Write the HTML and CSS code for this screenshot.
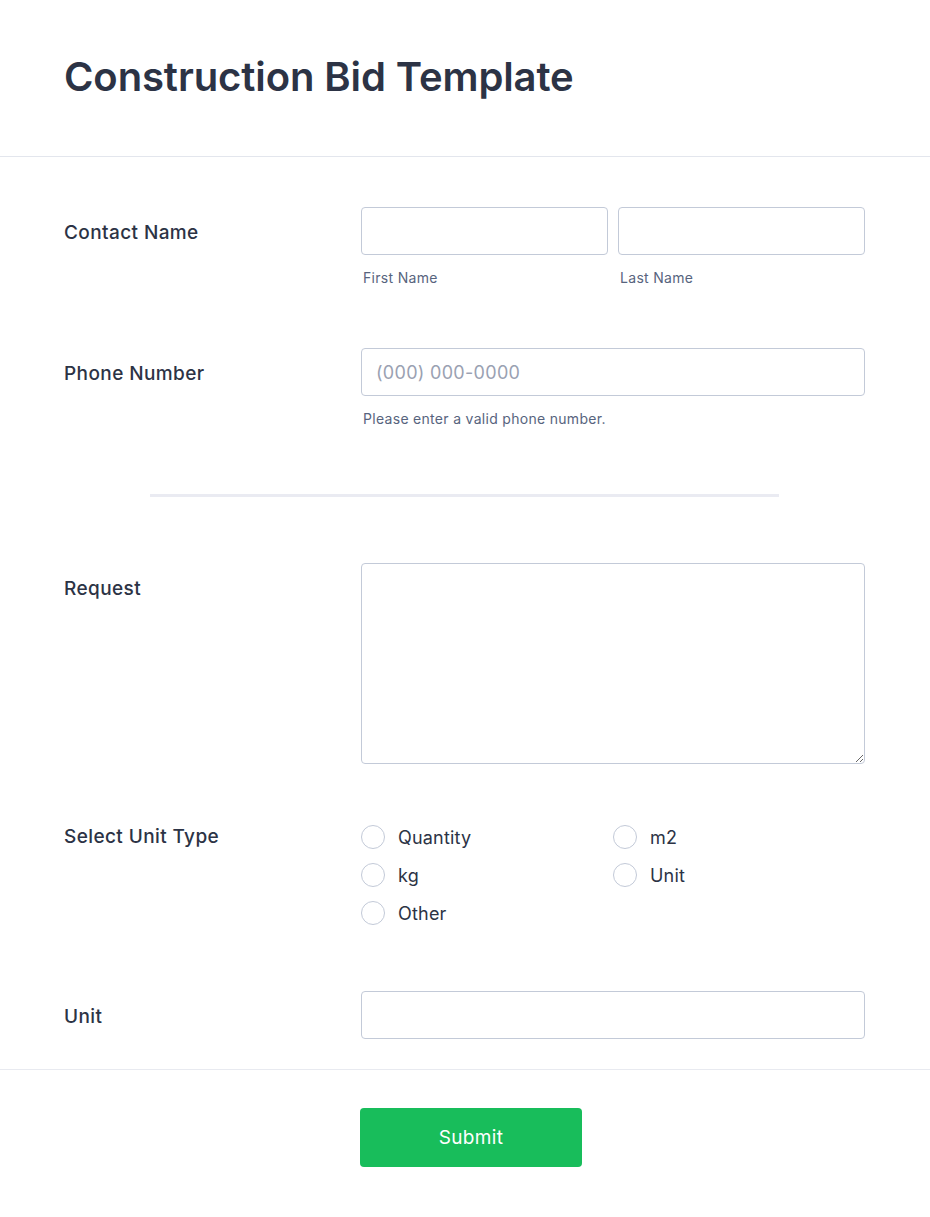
FILE: index.html
```html
<!DOCTYPE html>
<html lang="en">
<head>
    <meta charset="UTF-8">
    <meta name="viewport" content="width=device-width, initial-scale=1.0">
    <title>Construction Bid Template</title>
    <link rel="stylesheet" href="styles.css">
</head>
<body>
    <div class="form">
        <div class="header">
            <h1>Construction Bid Template</h1>
        </div>

        <div class="campos">
            <!-- Contact -->
            <div class="linha">
                <label class="rotulo">Contact Name</label>
                <div class="entrada">
                    <div class="nome-duplo">
                        <div>
                            <input type="text" class="caixa">
                            <div class="sub">First Name</div>
                        </div>
                        <div>
                            <input type="text" class="caixa">
                            <div class="sub">Last Name</div>
                        </div>
                    </div>
                </div>
            </div>

            <div class="linha">
                <label class="rotulo">Phone Number</label>
                <div class="entrada">
                    <input type="text" class="caixa" placeholder="(000) 000-0000">
                    <div class="sub">Please enter a valid phone number.</div>
                </div>
            </div>

            <div class="divisor"></div>

            <div class="linha">
                <label class="rotulo">Request</label>
                <div class="entrada">
                    <textarea class="caixa area"></textarea>
                </div>
            </div>

            <div class="linha linha-radio">
                <label class="rotulo rotulo-radio">Select Unit Type</label>
                <div class="entrada">
                    <div class="opcoes">
                        <label class="opcao"><span class="bola"></span>Quantity</label>
                        <label class="opcao"><span class="bola"></span>m2</label>
                        <label class="opcao"><span class="bola"></span>kg</label>
                        <label class="opcao"><span class="bola"></span>Unit</label>
                        <label class="opcao"><span class="bola"></span>Other</label>
                    </div>
                </div>
            </div>

            <div class="linha">
                <label class="rotulo">Unit</label>
                <div class="entrada">
                    <input type="text" class="caixa">
                </div>
            </div>
        </div>

        <div class="rodape">
            <button class="enviar">Submit</button>
        </div>
    </div>
</body>
</html>
```

FILE: styles.css
```css
body {
    margin: 0;
    padding: 0;
    background-color: #fff;
    font-family: Inter, "Noto Sans", sans-serif;
    color: #2c3345;
}

.header {
    padding: 53px 64px 0;
    height: 103px;
    border-bottom: 1px solid #e3e6ed;
}

.header h1 {
    margin: 0;
    font-size: 40px;
    line-height: 48px;
    font-weight: 600;
    letter-spacing: -0.1px;
    color: #2c3345;
}

.campos {
    display: flex;
    flex-direction: column;
    gap: 61px;
    padding: 50px 65px 30px 64px;
    border-bottom: 1px solid #e8eaf0;
}

.linha {
    display: flex;
}

.rotulo {
    width: 297px;
    flex-shrink: 0;
    font-size: 19px;
    line-height: 24px;
    letter-spacing: 0.4px;
    padding-top: 14px;
    font-weight: 500;
}

.rotulo-radio {
    padding-top: 2px;
}

.entrada {
    flex: 1;
}

.nome-duplo {
    display: grid;
    grid-template-columns: 1fr 1fr;
    gap: 10px;
}

.caixa {
    display: block;
    box-sizing: border-box;
    width: 100%;
    height: 48px;
    border: 1px solid #c3cad8;
    border-radius: 4px;
    padding: 0 14px;
    font-family: inherit;
    font-size: 18px;
    letter-spacing: 0.3px;
    color: #2c3345;
    background: #fff;
}

.caixa::placeholder {
    color: #9aa1b2;
}

.area {
    height: 201px;
    resize: vertical;
}

.sub {
    margin-top: 14px;
    padding-left: 2px;
    font-size: 14px;
    line-height: 18px;
    letter-spacing: 0.3px;
    color: #57647e;
}

.divisor {
    margin: 5px 86px;
    height: 3px;
    background-color: #eaebf2;
}

.linha-radio {
    margin-top: -2px;
    padding-bottom: 3px;
}

.opcoes {
    display: grid;
    grid-template-columns: 252px 1fr;
    row-gap: 10px;
}

.opcao {
    display: flex;
    align-items: center;
    height: 28px;
    font-size: 18px;
    letter-spacing: 0.2px;
    color: #2c3345;
}

.bola {
    width: 22px;
    height: 22px;
    border: 1px solid #c3cad8;
    border-radius: 50%;
    margin-right: 13px;
    flex-shrink: 0;
}

.rodape {
    display: flex;
    justify-content: center;
    padding: 38px 0 51px;
}

.enviar {
    width: 222px;
    height: 59px;
    margin-left: 12px;
    background-color: #18bd5b;
    border: none;
    border-radius: 4px;
    color: #fff;
    font-family: inherit;
    font-size: 19px;
    font-weight: 400;
    letter-spacing: 0.3px;
}
```
